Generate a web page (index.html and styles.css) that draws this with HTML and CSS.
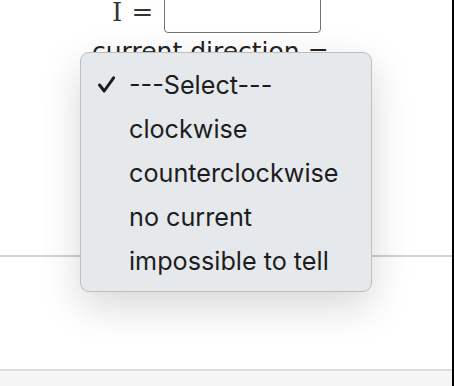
FILE: index.html
```html
<!DOCTYPE html>
<html lang="en">
<head>
	<meta charset="UTF-8">
	<title>current direction</title>
	<link rel="stylesheet" href="styles.css">
</head>
<body>
	<div class="page">
		<div class="problem">
			<div class="row row-current">
				<span class="math">I =</span>
				<input type="text" class="answer">
			</div>
			<div class="row row-direction">
				<span class="label">current direction =</span>
			</div>
		</div>
		<div class="blank"></div>
		<div class="footer"></div>
	</div>

	<div class="menu">
		<div class="option selected">
			<svg class="check" width="17" height="17" viewBox="0 0 17 17">
				<path d="M1.6 9 L6.2 15 L15.6 1.8" fill="none" stroke="#1d1d1f" stroke-width="3" stroke-linecap="round" stroke-linejoin="round"/>
			</svg>
			<span>---Select---</span>
		</div>
		<div class="option"><span>clockwise</span></div>
		<div class="option"><span>counterclockwise</span></div>
		<div class="option"><span>no current</span></div>
		<div class="option"><span>impossible to tell</span></div>
	</div>
</body>
</html>
```

FILE: styles.css
```css
*{
	padding: 0;
	margin: 0;
	box-sizing: border-box;
}
html,body{
	width: 100%;
	height: 100%;
}
body{
	background-color: #000;
	font-family: "DejaVu Sans", sans-serif;
	color: #222;
}
.page{
	width: 452px;
	min-height: 100%;
	background-color: #fff;
	display: flex;
	flex-direction: column;
}
.problem{
	height: 257px;
	border-bottom: 2px solid #d2d2d2;
	overflow: hidden;
}
.row{
	display: flex;
	align-items: center;
}
.row-current{
	height: 33px;
	align-items: flex-start;
	padding-left: 112px;
}
.math{
	font-family: "DejaVu Serif", serif;
	font-size: 26px;
	line-height: 24px;
	color: #333;
	margin-right: 11px;
	word-spacing: 1px;
}
.answer{
	width: 157px;
	height: 40px;
	margin-top: -7px;
	border: 1.5px solid #727272;
	border-radius: 4px;
	background-color: #fff;
}
.row-direction{
	padding-left: 92px;
	margin-top: 4px;
}
.label{
	font-size: 25px;
	line-height: 30px;
	color: #222;
}
.blank{
	height: 114px;
	border-bottom: 2px solid #dcdcdc;
}
.footer{
	flex: 1;
	background-color: #f5f5f5;
}

/* opened select list */
.menu{
	position: absolute;
	left: 80px;
	top: 52px;
	width: 292px;
	padding: 10px 0 8px 0;
	background-color: #e6e9ec;
	border: 1px solid #bdbfc2;
	border-radius: 9px;
	box-shadow: 0px 14px 40px rgba(0,0,0,0.16);
	font-family: "Inter", "Liberation Sans", sans-serif;
	font-size: 25.2px;
	color: #1d1d1f;
}
.option{
	height: 44px;
	display: flex;
	align-items: center;
	padding-left: 48px;
	position: relative;
}
.check{
	position: absolute;
	left: 17px;
	top: 13px;
}
```
